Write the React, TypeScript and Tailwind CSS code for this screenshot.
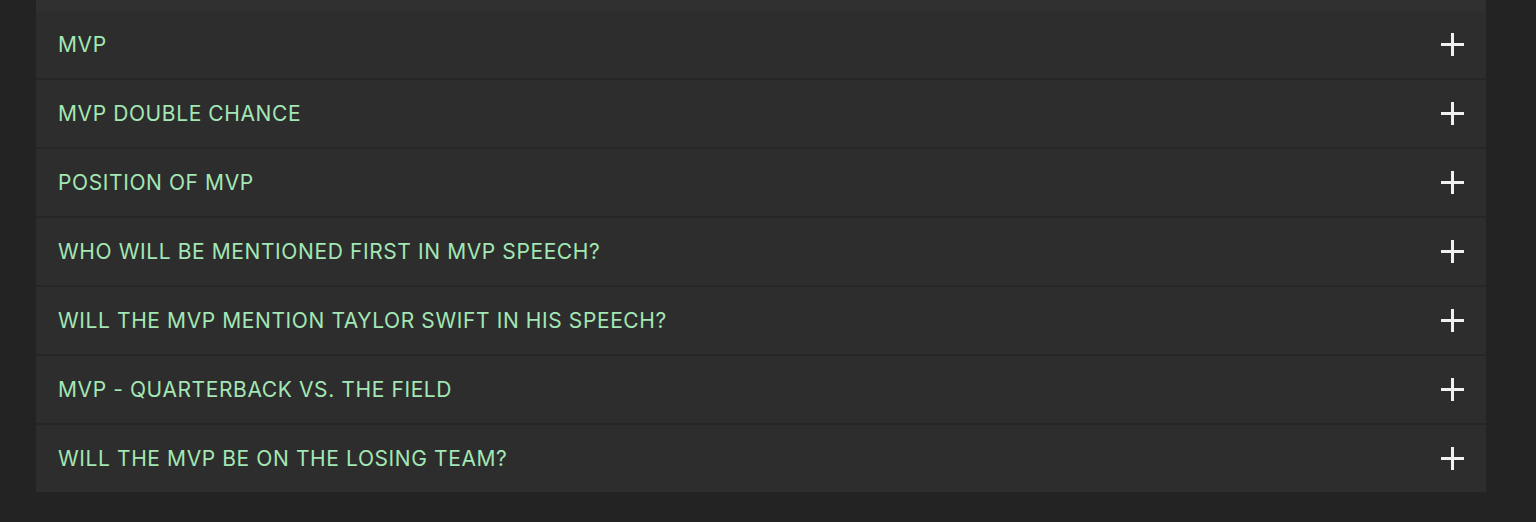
const markets = [
  "MVP",
  "MVP DOUBLE CHANCE",
  "POSITION OF MVP",
  "WHO WILL BE MENTIONED FIRST IN MVP SPEECH?",
  "WILL THE MVP MENTION TAYLOR SWIFT IN HIS SPEECH?",
  "MVP - QUARTERBACK VS. THE FIELD",
  "WILL THE MVP BE ON THE LOSING TEAM?",
];

function PlusIcon() {
  return (
    <svg width="23" height="23" viewBox="0 0 23 23" className="text-[#f0f0f0]">
      <rect x="0" y="10" width="23" height="3" fill="currentColor" />
      <rect x="10" y="0" width="3" height="23" fill="currentColor" />
    </svg>
  );
}

export default function App() {
  return (
    <div className="min-h-[522px] bg-[#232323] px-[36px] pb-[31px] font-['Inter',sans-serif]">
      <div className="w-[1450px]">
        <div className="h-[11px] bg-[#303030]"></div>
        <div className="flex flex-col gap-[2px] bg-[#262626]">
          {markets.map((m) => (
            <button
              key={m}
              className="flex h-[67px] items-center justify-between bg-[#2d2d2d] pl-[22px] pr-[22px] text-left"
            >
              <span className="text-[21px] tracking-[0.6px] text-[#a3e7b5]">{m}</span>
              <PlusIcon />
            </button>
          ))}
        </div>
      </div>
    </div>
  );
}
